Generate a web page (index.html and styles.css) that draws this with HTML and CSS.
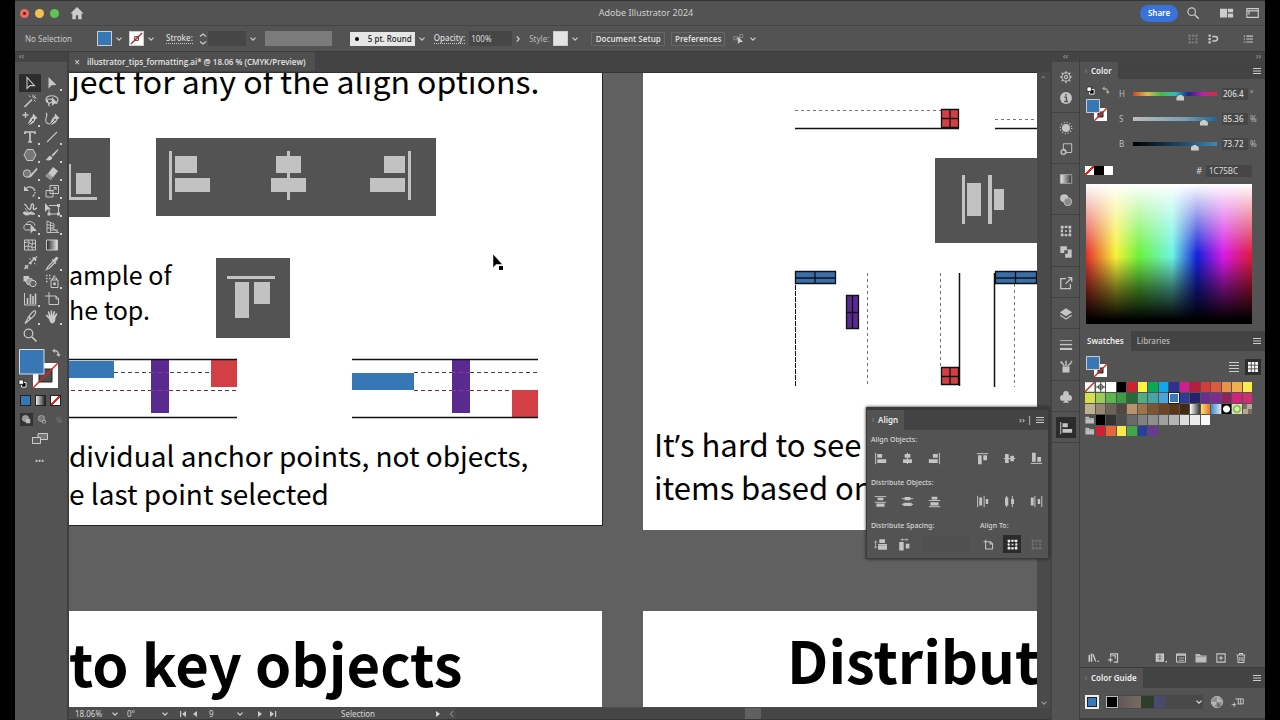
FILE: index.html
```html
<!DOCTYPE html>
<html lang="en">
<head>
<meta charset="utf-8">
<title>Adobe Illustrator 2024</title>
<link rel="stylesheet" href="styles.css">
</head>
<body>
<svg class="defs" aria-hidden="true">
  <defs>
    <linearGradient id="g-bw"><stop offset="0" stop-color="#222"/><stop offset="1" stop-color="#e8e8e8"/></linearGradient>
    <linearGradient id="g-wb"><stop offset="0" stop-color="#eee"/><stop offset="1" stop-color="#333"/></linearGradient>
    <symbol id="caret" viewBox="0 0 8 8"><path d="M1.500 2.700 4 5.200 6.500 2.700" fill="none" stroke="currentColor" stroke-width="1.200"/></symbol>
    <symbol id="menu" viewBox="0 0 8 8"><path d="M0 1.500h8M0 4h8M0 6.500h8" stroke="currentColor"/></symbol>
    <symbol id="arrow" viewBox="0 0 16 16"><path d="M5 2.500v11l3-2.900h4.500z" fill="none" stroke="currentColor" stroke-width="1.100"/></symbol>
    <symbol id="direct" viewBox="0 0 16 16"><path d="M4.500 2v11.500l3.200-3.200 4.800-.3z" fill="currentColor"/></symbol>
    <symbol id="wand" viewBox="0 0 16 16"><path d="M2.500 14 10 6.500" stroke="currentColor" stroke-width="1.700"/><path d="M11 1.500v3M14.500 5h-3M13.500 2.500l-1.700 1.700M7 2.500l1.500 1.500M13.500 8.500 12 7" stroke="currentColor"/></symbol>
    <symbol id="lasso" viewBox="0 0 16 16"><path d="M5 10C1 9 1 4 5.500 3c5-1 8.500 1 8.500 4 0 1-1 2-2 2.500M5 10c-2-1-3-4 1-4s3 3 0 4c-2 1-2 2 0 3" fill="none" stroke="currentColor" stroke-width="1.200"/><path d="M8 4v9l2.300-2.300H14z" fill="currentColor"/></symbol>
    <symbol id="pen" viewBox="0 0 16 16"><path d="m10 2.500 4.500 4.500-2 1.200c-.7 3-3 4.800-7.500 5.800 1-4.500 2-7 4.500-8.500z" fill="currentColor"/><path d="M5 14l5-5" stroke="#535353"/><circle cx="10" cy="8.800" r="1" fill="#535353"/></symbol>
    <symbol id="penplus" viewBox="0 0 16 16"><use href="#pen" x="1" width="16" height="16"/><path d="M3.500 1v6M.5 4h6" stroke="currentColor" stroke-width="1.300"/></symbol>
    <symbol id="curve" viewBox="0 0 16 16"><use href="#pen" x="1" width="16" height="16"/><path d="M2 2c3 2-2 6 0 9 .7 1 2 2 4 2" fill="none" stroke="currentColor" stroke-width="1.100"/></symbol>
    <symbol id="type" viewBox="0 0 16 16"><path d="M3 5V3h10v2M8 3v10M6 13h4" fill="none" stroke="currentColor" stroke-width="1.700"/></symbol>
    <symbol id="line" viewBox="0 0 16 16"><path d="M3 13 13 3" stroke="currentColor" stroke-width="1.100"/></symbol>
    <symbol id="hex" viewBox="0 0 16 16"><path d="M5 2.500h6L14 8l-3 5.500H5L2 8z" fill="#777" stroke="currentColor"/></symbol>
    <symbol id="brush" viewBox="0 0 16 16"><path d="M14 2 7.500 8l1.500 1.500L14.500 3zM6.500 8.700c-3 .3-2.500 3.300-5 3.800 2 1.800 7 1 6.700-2z" fill="currentColor"/></symbol>
    <symbol id="shaper" viewBox="0 0 16 16"><circle cx="5" cy="8.500" r="3.700" fill="#777" stroke="currentColor"/><path d="M15 2.500 8 10l-2.500 2.800L9 12l6.500-7.500z" fill="currentColor"/></symbol>
    <symbol id="eraser" viewBox="0 0 16 16"><path d="m9 2 5 4-5 6.500-5-4z" fill="currentColor"/><path d="m3.500 9 4.700 3.800-1.500 1.700L2 11z" fill="#888" stroke="currentColor" stroke-width=".7"/></symbol>
    <symbol id="rotate" viewBox="0 0 16 16"><path d="M3.500 6.500C6 2 13 4 13 9c0 2-1 3.500-2.500 4.500" fill="none" stroke="currentColor" stroke-width="1.300" stroke-dasharray="12 1 1.500 1"/><path d="M2 3v5h5z" fill="currentColor"/></symbol>
    <symbol id="scale" viewBox="0 0 16 16"><path d="M6 2.500h8.500v8H6zM2 7.500h7v6.500H2zM8 8.500l4-4M9.500 4.500H12V7" fill="none" stroke="currentColor"/></symbol>
    <symbol id="width" viewBox="0 0 16 16"><path d="M2 3.500c3-1 3 5 5.500 5S8 3 10.500 3s-.5 5.500 1.500 5.500S14 7 15 7" fill="none" stroke="currentColor" stroke-width="1.300"/><path d="M1 12c3-3 4 1 6-.5s4 0 6 1.500c-3 1-4-.5-6 .5s-4 1-6-1.500zM3 7l3 4" fill="currentColor" stroke="currentColor" stroke-width=".8"/></symbol>
    <symbol id="free" viewBox="0 0 16 16"><path d="M1 2v9l2.500-2.500H7z" fill="currentColor"/><path d="M5 4.500h9.500v8.500H5V9" fill="none" stroke="currentColor"/><path d="M13 3h3v3h-3zM13 11.500h3v3h-3zM3.500 11.500h3v3h-3z" fill="currentColor"/></symbol>
    <symbol id="builder" viewBox="0 0 16 16"><path d="M8 11H3.500C1 10 1.500 6 4 5.500c1-4 8-4 9 1M4 5.500h5" fill="none" stroke="currentColor"/><path d="M8.500 5v9.500l2.500-2.500h4z" fill="currentColor"/></symbol>
    <symbol id="persp" viewBox="0 0 16 16"><path d="M3 2v11.500h4M3 2l7 3v4M3 5.500l7 1.500M3 9l7 0M6.500 3.500V13M4 13.500h11M7 11h7M8 9l6 4" fill="none" stroke="currentColor" stroke-width=".9"/></symbol>
    <symbol id="mesh" viewBox="0 0 16 16"><path d="M2.500 3h11v10h-11zM2.500 6c5-3 5 3 11 0M2.500 10c5-3 6 2 11 0M6 3c3 4-2 6 1 10M10 3c2 4-2 6 1 10" fill="none" stroke="currentColor"/></symbol>
    <symbol id="grad" viewBox="0 0 16 16"><path d="M2.500 3h11v10h-11z" fill="url(#g-bw)" stroke="currentColor"/></symbol>
    <symbol id="blob" viewBox="0 0 16 16"><path d="M2.500 14 6 10M7.500 8.500l5-5M3 10.500l3 3M10.500 3h3v3" stroke="currentColor" fill="none" stroke-width="1.500"/><path d="M7 7.500 9.500 9" stroke="currentColor" stroke-width="2"/><path d="M7.500 3.500 9 4.500M12 8l1.500 1M14 1l1 1.500" stroke="currentColor"/></symbol>
    <symbol id="dropper" viewBox="0 0 16 16"><path d="m9 5 3-3c1-.8 2.800 1 2 2l-3 3.500z" fill="currentColor"/><path d="M9.500 6 4 11.500l-1.500 3 3-1.500L11 7.500M8 4.500l4 4" fill="none" stroke="currentColor" stroke-width="1.200"/></symbol>
    <symbol id="blend" viewBox="0 0 16 16"><path d="M1.500 3h5.500v5.500H1.500z" fill="currentColor"/><circle cx="7.500" cy="8.500" r="3.300" fill="#999" stroke="currentColor"/><circle cx="11" cy="10.500" r="3.200" fill="#606060" stroke="currentColor"/></symbol>
    <symbol id="spray" viewBox="0 0 16 16"><path d="M7 7h7v7.500H7zM8.500 7V5h4v2M9.500 4.500V3h2" fill="none" stroke="currentColor"/><circle cx="10.500" cy="10.700" r="1.500" fill="currentColor"/><path d="M2 2.500h1.500M5 2.500h1.500M2 5.500h1.500M5 5.500h1.500M2 8.500h1.500" stroke="currentColor" stroke-width="1.500"/></symbol>
    <symbol id="graph" viewBox="0 0 16 16"><path d="M2.500 2v12h12" fill="none" stroke="currentColor"/><path d="M5.500 7v6M8.500 3v10M11 5v8M13.500 2.500v10.500" stroke="currentColor" stroke-width="1.600"/></symbol>
    <symbol id="artb" viewBox="0 0 16 16"><path d="M1 5h11l2.500 2.500V13.500H5V1M12 5v3h2.500" fill="none" stroke="currentColor"/></symbol>
    <symbol id="knife" viewBox="0 0 16 16"><path d="M13.500 2c1 2-2 6-4.500 7.500l-2-2C9 4.500 12 1.500 13.500 2zM6.500 8l2 2L3 14.500z" fill="none" stroke="currentColor" stroke-width="1.200"/></symbol>
    <symbol id="hand" viewBox="0 0 16 16"><path d="M5 10 2 7c-.7-1 .6-1.700 1.400-1L5 7.500 3.800 3.300c-.2-1 1.200-1.300 1.500-.4L6.600 6.500V2c0-1 1.500-1 1.500 0v4.500L9.500 2.700c.3-1 1.700-.6 1.500.4l-1 4 2-2.500c.7-.8 1.800 0 1.200 1L11.500 9c-.2 3-1.200 5.500-3.200 5.500S5.500 12 5 10z" fill="currentColor"/></symbol>
    <symbol id="glass" viewBox="0 0 16 16"><circle cx="6.500" cy="6.500" r="4.300" fill="none" stroke="currentColor" stroke-width="1.300"/><path d="m10 10 4.500 4.500" stroke="currentColor" stroke-width="1.700"/></symbol>
    <symbol id="swap" viewBox="0 0 10 10"><path d="M3.500 2.800c3 0 4 1 4 4" fill="none" stroke="currentColor" stroke-width="1.400"/><path d="M4 .5v4.600L1 2.800zM5.200 6h4.600L7.500 9z" fill="currentColor"/></symbol>
    <symbol id="defc" viewBox="0 0 10 10"><path d="M4 4h5v5H4z" fill="#000" stroke="#fff"/><path d="M1 1h5v5H1z" fill="#fff" stroke="#222"/></symbol>
    <symbol id="mode" viewBox="0 0 16 16"><circle cx="6.500" cy="6.500" r="4.500" fill="#999" stroke="currentColor"/><path d="M7 7h6.500v6.500H7z" fill="currentColor"/></symbol>
    <symbol id="mode2" viewBox="0 0 16 16"><circle cx="6.500" cy="6.500" r="4.500" fill="#777" stroke="currentColor"/><path d="M8 9.500h4.500V13H8z" fill="#555" stroke="currentColor"/></symbol>
    <symbol id="screen" viewBox="0 0 16 16"><path d="M6 2.500h9.500v6H6z" fill="#777" stroke="currentColor"/><path d="M.5 6.500h8v6h-8z" fill="#606060" stroke="currentColor"/></symbol>
    <symbol id="home" viewBox="0 0 16 16"><path d="M8 1 .5 8.500h2.200V15h4v-4.500h2.600V15h4V8.500h2.200z" fill="currentColor"/></symbol>
    <symbol id="layout" viewBox="0 0 16 12"><path d="M0 1h8v10H0zM9 1h6v4H9zM9 6.500h6V11H9z" fill="currentColor"/></symbol>
    <symbol id="wins" viewBox="0 0 16 12"><path d="M1 1h13v10H1zM1 3.500h13M3.500 3.500V8" fill="none" stroke="currentColor" stroke-width="1.300"/></symbol>
    <symbol id="isol" viewBox="0 0 16 16"><path d="M1 5h5v4H1zM9 2h4v4H9zM4 7h6" fill="none" stroke="#999"/><path d="M6.500 4.500v10l3-2.500h4z" fill="currentColor"/></symbol>
    <symbol id="snap" viewBox="0 0 16 16"><path d="M2 2h3v3H2zM2 6.500h3v3H2zM2 11h3v3H2z" fill="currentColor"/><path d="M7 4.500h4a2.800 2.800 0 0 1 0 6H7" fill="none" stroke="currentColor" stroke-width="2"/></symbol>
    <symbol id="list" viewBox="0 0 12 12"><path d="M4 2.500h8M4 6h8M4 9.500h8M1 2.500h1.500M1 6h1.500M1 9.500h1.500" stroke="currentColor" stroke-width="1.300"/></symbol>
    <symbol id="gear" viewBox="0 0 16 16"><circle cx="8" cy="8" r="4.800" fill="none" stroke="currentColor" stroke-width="1.300"/><circle cx="8" cy="8" r="1.800" fill="none" stroke="currentColor" stroke-width="1.300"/><path d="M8 1v3M8 12v3M1 8h3M12 8h3M3 3l2 2M11 11l2 2M3 13l2-2M11 5l2-2" stroke="currentColor" stroke-width="1.300"/></symbol>
    <symbol id="info" viewBox="0 0 16 16"><circle cx="8" cy="8" r="6.800" fill="currentColor"/><path d="M8 3.500v2M6 7h2.500v5M6 12h4.500" stroke="#535353" stroke-width="1.600" fill="none"/></symbol>
    <symbol id="sun" viewBox="0 0 16 16"><circle cx="8" cy="8" r="4.600" fill="currentColor"/><circle cx="8" cy="8" r="6.500" fill="none" stroke="currentColor" stroke-width="1.500" stroke-dasharray="1.200 2.200"/></symbol>
    <symbol id="export" viewBox="0 0 16 16"><path d="M5 8V2h9.500v10H9M4 8.500h3.500M8 9.500v4" fill="none" stroke="currentColor" stroke-width="1.100"/><circle cx="5" cy="11.500" r="2.600" fill="none" stroke="currentColor" stroke-width="1.500"/></symbol>
    <symbol id="trans" viewBox="0 0 16 16"><circle cx="6" cy="6" r="4.700" fill="currentColor"/><circle cx="10" cy="10" r="4.500" fill="#8b8b8b" stroke="currentColor"/></symbol>
    <symbol id="tform" viewBox="0 0 16 16"><path d="M3.500 3.500h9v9h-9z" fill="none" stroke="currentColor" stroke-dasharray="2 1"/><path d="M2 2h3v3H2zM6.700 2h2.600v2.500H6.700zM11 2h3v3h-3zM2 11h3v3H2zM11 11h3v3h-3zM6.700 11.500h2.600V14H6.700zM2 6.700h2.500v2.600H2zM11.500 6.700H14v2.600h-2.500zM7 7h2v2H7z" fill="currentColor"/></symbol>
    <symbol id="pathf" viewBox="0 0 16 16"><path d="M1.500 1.500H9V5h5.500v9.500H7V9H1.500z" fill="currentColor"/><path d="M6 6h4v4H6z" fill="#535353"/></symbol>
    <symbol id="asset" viewBox="0 0 16 16"><path d="M8 3H2v11.500h11V9M7.500 9 14 2.500M10 1.800h4.500V6.500" fill="none" stroke="currentColor" stroke-width="1.500"/></symbol>
    <symbol id="layers" viewBox="0 0 16 16"><path d="M8 1.500 15 6l-7 4.500L1 6z" fill="currentColor"/><path d="M1.500 9.500 8 13.700l6.500-4.200" fill="none" stroke="currentColor" stroke-width="1.500"/></symbol>
    <symbol id="stroke" viewBox="0 0 16 16"><path d="M1 3h14" stroke="currentColor"/><path d="M1 7.500h14" stroke="currentColor" stroke-width="1.600"/><path d="M1 12.500h14" stroke="currentColor" stroke-width="2.400"/></symbol>
    <symbol id="brushes" viewBox="0 0 16 16"><path d="M4 8.500h8v7H4z" fill="currentColor"/><path d="M6 8 3 3.500M8 8V2M10 8l4-4" stroke="currentColor" stroke-width="1.600"/><path d="M1.500 5 2 2l2.500 2zM13 2h2v3z" fill="currentColor"/></symbol>
    <symbol id="club" viewBox="0 0 16 16"><circle cx="8" cy="4.500" r="3.300" fill="currentColor"/><circle cx="4.500" cy="9" r="3.300" fill="currentColor"/><circle cx="11.500" cy="9" r="3.300" fill="currentColor"/><path d="M7 7h2l.5 5 2 2.500h-7l2-2.500z" fill="currentColor"/></symbol>
    <symbol id="al" viewBox="0 0 16 16"><path d="M2 1v14" stroke="currentColor" stroke-width="1.200"/><path d="M4 2.500h6v4.500H4zM4 9h11v4.500H4z" fill="currentColor"/></symbol>
    <symbol id="ac" viewBox="0 0 16 16"><path d="M8 1v14" stroke="currentColor" stroke-width="1.200"/><path d="M4.500 2.500h7v4.500h-7zM2.500 9h11v4.500h-11z" fill="currentColor"/></symbol>
    <symbol id="ar" viewBox="0 0 16 16"><use href="#al" width="16" height="16" transform="matrix(-1 0 0 1 16 0)"/></symbol>
    <symbol id="at" viewBox="0 0 16 16"><use href="#al" width="16" height="16" transform="matrix(0 1 -1 0 16 0)"/></symbol>
    <symbol id="at2" viewBox="0 0 16 16"><path d="M1 2h14" stroke="currentColor" stroke-width="1.200"/><path d="M2.500 4H7v11H2.500zM9 4h4.500v6H9z" fill="currentColor"/></symbol>
    <symbol id="am" viewBox="0 0 16 16"><path d="M1 8h14" stroke="currentColor" stroke-width="1.200"/><path d="M2.500 2.500H7v11H2.500zM9 4.500h4.500v7H9z" fill="currentColor"/></symbol>
    <symbol id="ab" viewBox="0 0 16 16"><path d="M1 14h14" stroke="currentColor" stroke-width="1.200"/><path d="M2.500 1H7v11H2.500zM9 6h4.500v6H9z" fill="currentColor"/></symbol>
    <symbol id="dt" viewBox="0 0 16 16"><path d="M1 2h14M1 9h14" stroke="currentColor" stroke-width="1.200"/><path d="M4.500 3.500h7v3h-7zM3 10.500h10v4H3z" fill="currentColor"/></symbol>
    <symbol id="dm" viewBox="0 0 16 16"><path d="M1 4.500h14M1 11.500h14" stroke="currentColor" stroke-width="1.200"/><path d="M4.500 2.500h7v4h-7zM3 9.500h10v4H3z" fill="currentColor"/></symbol>
    <symbol id="db" viewBox="0 0 16 16"><path d="M1 6.800h14M1 14.400h14" stroke="currentColor" stroke-width="1.200"/><path d="M4.500 2h7v3.500h-7zM3 9h10v4H3z" fill="currentColor"/></symbol>
    <symbol id="dl" viewBox="0 0 16 16"><path d="M2 1v14M10 1v14" stroke="currentColor" stroke-width="1.200"/><path d="M4 3h3.500v10H4zM12 5h3v6h-3z" fill="currentColor"/></symbol>
    <symbol id="dc" viewBox="0 0 16 16"><path d="M4.500 1v14M11.500 1v14" stroke="currentColor" stroke-width="1.200"/><path d="M2.500 3h4v10h-4zM10 5h3.500v6H10z" fill="currentColor"/></symbol>
    <symbol id="dr" viewBox="0 0 16 16"><path d="M6 1v14M14.500 1v14" stroke="currentColor" stroke-width="1.200"/><path d="M1 3h3.500v10H1zM9.500 5h3v6h-3z" fill="currentColor"/></symbol>
    <symbol id="sv" viewBox="0 0 16 16"><path d="M5 9h11v5.500H5zM6.500 1.500h7v4.500h-7zM5 7.500h11v1H5z" fill="currentColor"/><path d="M2 4v8M.5 5.500 2 3.500l1.500 2M.5 10.500 2 12.500l1.500-2" stroke="currentColor" fill="none"/></symbol>
    <symbol id="sh" viewBox="0 0 16 16"><path d="M1.500 5H7v10.500H1.500zM9.500 7H14v6H9.500z" fill="currentColor"/><path d="M4 2h8M5.500.5 4 2l1.500 1.500M10.500.5 12 2l-1.500 1.500" stroke="currentColor" fill="none"/></symbol>
    <symbol id="toart" viewBox="0 0 16 16"><path d="M2 4.500h8.500L13 7v6.500H4.500V2M10 4.500V7.500h3" fill="none" stroke="currentColor" stroke-width="1.300"/></symbol>
    <symbol id="folder" viewBox="0 0 12 10"><path d="M.5 1h4l1.500 1.500h5.500V9.500H.5z" fill="#bdbdbd"/><path d="M.5 3.600h11" stroke="#888" stroke-width=".7"/></symbol>
    <symbol id="grid9" viewBox="0 0 12 12"><path d="M1 1h2.800v2.800H1zM4.600 1h2.800v2.800H4.600zM8.200 1H11v2.800H8.200zM1 4.600h2.800v2.800H1zM4.600 4.600h2.800v2.800H4.600zM8.200 4.600H11v2.800H8.200zM1 8.200h2.800V11H1zM4.600 8.200h2.800V11H4.600zM8.200 8.200H11V11H8.200z" fill="currentColor"/></symbol>
    <symbol id="rows" viewBox="0 0 12 12"><path d="M1 1.500h10M1 4.500h10M1 7.500h10M1 10.500h10" stroke="currentColor" stroke-width="1.200"/></symbol>
    <symbol id="lib" viewBox="0 0 16 16"><path d="M3 4v9M6 2v11" stroke="currentColor" stroke-width="2"/><path d="m8 3 3.500 9.500M14 12.500h2" stroke="currentColor" stroke-width="1.800"/></symbol>
    <symbol id="addlib" viewBox="0 0 16 16"><path d="M5 7V2.500h9v11H9" fill="none" stroke="currentColor" stroke-width="1.600"/><path d="M1.500 10.500h6M4.500 7.500v6M7 5h4v4" stroke="currentColor" stroke-width="1.400" fill="none"/></symbol>
    <symbol id="kinds" viewBox="0 0 16 16"><path d="M1 2h11v11H1z" fill="currentColor"/><path d="M3 5.500h7M3 9h7M6.500 3v9" stroke="#666"/><path d="M14 13h2" stroke="currentColor" stroke-width="2"/></symbol>
    <symbol id="opts" viewBox="0 0 16 16"><path d="M2 2.500h12v11H2z" fill="none" stroke="currentColor" stroke-width="1.300"/><path d="M2 4h12" stroke="currentColor" stroke-width="2"/><path d="M5 8h7M5 11h7" stroke="currentColor"/></symbol>
    <symbol id="plus" viewBox="0 0 16 16"><path d="M2.500 2.500h11v11h-11zM8 5v6M5 8h6" fill="none" stroke="currentColor" stroke-width="1.400"/></symbol>
    <symbol id="trash" viewBox="0 0 16 16"><path d="M2 4h12M6 3.500V2h4v1.500M3.500 5l.7 9h7.600l.7-9M6.500 6.500v5.500M9.500 6.500v5.500" fill="none" stroke="currentColor" stroke-width="1.400"/></symbol>
    <symbol id="wheel" viewBox="0 0 16 16"><circle cx="8" cy="8" r="6.500" fill="#8e8e8e" stroke="#bbb"/><path d="M8 1.500 14.500 8H8zM8 8H1.500L5 13z" fill="#b8b8b8"/><path d="M8 8v6.500l5-2z" fill="#6e6e6e"/></symbol>
    <symbol id="savegrp" viewBox="0 0 18 14"><path d="M6 2h11v7H9M10 2v7M13.500 2v7M1 10h6M4.500 7v6" fill="none" stroke="currentColor" stroke-width="1.300"/></symbol>
  </defs>
</svg>
<div class="app">
  <header class="titlebar">
    <div class="title-left">
      <span class="light red"></span><span class="light amber"></span><span class="light green"></span>
      <button class="icon-btn home" aria-label="Home"><svg class="i14"><use href="#home"/></svg></button>
    </div>
    <h1 class="app-title">Adobe Illustrator 2024</h1>
    <div class="title-right">
      <button class="share">Share</button>
      <button class="icon-btn search" aria-label="Search"><svg class="i14"><use href="#glass"/></svg></button>
      <button class="icon-btn layout" aria-label="Arrange documents"><svg class="i14"><use href="#layout"/></svg></button>
      <button class="icon-btn" aria-label="Switch workspace"><svg class="i14"><use href="#wins"/></svg></button>
    </div>
  </header>

  <div class="controlbar">
    <span class="selection">No Selection</span>
    <div class="pick"><button class="chip blue" aria-label="Fill"></button><button class="icon-btn" aria-label="Fill options"><svg class="i8"><use href="#caret"/></svg></button></div>
    <div class="pick wide"><button class="chip" aria-label="Stroke colour"><svg class="full" viewBox="0 0 14 14"><path fill="#fff" d="M0 0h14v14H0z"/><path d="M5 5h4v4H5z" fill="none" stroke="#333"/><path d="M1 13 13 1" stroke="#c22" stroke-width="1.500"/></svg></button><button class="icon-btn" aria-label="Stroke options"><svg class="i8"><use href="#caret"/></svg></button></div>
    <label class="lbl stroke-lbl" for="weight">Stroke:</label>
    <div class="weight"><button class="icon-btn" aria-label="Step weight"><svg class="step" viewBox="0 0 10 14"><path d="m2 4.500 3-2.500 3 2.500M2 9.500 5 12l3-2.500" fill="none" stroke="currentColor" stroke-width="1.200"/></svg></button><input id="weight" class="field"><button class="icon-btn" aria-label="Weight presets"><svg class="i8"><use href="#caret"/></svg></button></div>
    <button class="profile" aria-label="Width profile"></button>
    <div class="brushpick"><button class="brush"><span class="dot"></span>5 pt. Round</button><button class="icon-btn" aria-label="Brushes"><svg class="i8"><use href="#caret"/></svg></button></div>
    <label class="lbl opacity-lbl" for="opacity">Opacity:</label>
    <div class="opacity"><input id="opacity" class="field" value="100%"><button class="icon-btn" aria-label="Opacity slider"><svg class="i8 right"><use href="#caret"/></svg></button></div>
    <span class="style-lbl">Style:</span>
    <div class="pick stylepick"><button class="chip plain" aria-label="Graphic style"></button><button class="icon-btn" aria-label="Styles"><svg class="i8"><use href="#caret"/></svg></button></div>
    <button class="cmd setup">Document Setup</button>
    <button class="cmd prefs">Preferences</button>
    <button class="icon-btn isol" aria-label="Select similar"><svg class="i12"><use href="#isol"/></svg><svg class="i8"><use href="#caret"/></svg></button>
    <div class="cb-right">
      <svg class="i12 dim"><use href="#tform"/></svg>
      <button class="icon-btn" aria-label="Snap"><svg class="i12"><use href="#snap"/></svg></button>
      <button class="icon-btn last" aria-label="Control menu"><svg class="i10"><use href="#list"/></svg></button>
    </div>
  </div>

  <main class="main">
    <aside class="tools">
      <div class="grip">‹‹</div>
      <div class="toolgrid">
        <button class="tool on" aria-label="Selection"><svg><use href="#arrow"/></svg></button>
        <button class="tool more" aria-label="Direct Selection"><svg><use href="#direct"/></svg></button>
        <button class="tool" aria-label="Magic Wand"><svg><use href="#wand"/></svg></button>
        <button class="tool" aria-label="Lasso"><svg><use href="#lasso"/></svg></button>
        <button class="tool more" aria-label="Pen"><svg><use href="#penplus"/></svg></button>
        <button class="tool" aria-label="Curvature"><svg><use href="#curve"/></svg></button>
        <button class="tool more" aria-label="Type"><svg><use href="#type"/></svg></button>
        <button class="tool more" aria-label="Line Segment"><svg><use href="#line"/></svg></button>
        <button class="tool more" aria-label="Polygon"><svg><use href="#hex"/></svg></button>
        <button class="tool more" aria-label="Paintbrush"><svg><use href="#brush"/></svg></button>
        <button class="tool more" aria-label="Shaper"><svg><use href="#shaper"/></svg></button>
        <button class="tool more" aria-label="Eraser"><svg><use href="#eraser"/></svg></button>
        <button class="tool more" aria-label="Rotate"><svg><use href="#rotate"/></svg></button>
        <button class="tool more" aria-label="Scale"><svg><use href="#scale"/></svg></button>
        <button class="tool more" aria-label="Width"><svg><use href="#width"/></svg></button>
        <button class="tool more" aria-label="Free Transform"><svg><use href="#free"/></svg></button>
        <button class="tool more" aria-label="Shape Builder"><svg><use href="#builder"/></svg></button>
        <button class="tool more" aria-label="Perspective Grid"><svg><use href="#persp"/></svg></button>
        <button class="tool" aria-label="Mesh"><svg><use href="#mesh"/></svg></button>
        <button class="tool" aria-label="Gradient"><svg><use href="#grad"/></svg></button>
        <button class="tool" aria-label="Dimension"><svg><use href="#blob"/></svg></button>
        <button class="tool more" aria-label="Eyedropper"><svg><use href="#dropper"/></svg></button>
        <button class="tool" aria-label="Blend"><svg><use href="#blend"/></svg></button>
        <button class="tool more" aria-label="Symbol Sprayer"><svg><use href="#spray"/></svg></button>
        <button class="tool more" aria-label="Column Graph"><svg><use href="#graph"/></svg></button>
        <button class="tool" aria-label="Artboard"><svg><use href="#artb"/></svg></button>
        <button class="tool more" aria-label="Slice"><svg><use href="#knife"/></svg></button>
        <button class="tool more" aria-label="Hand"><svg><use href="#hand"/></svg></button>
        <button class="tool" aria-label="Zoom"><svg><use href="#glass"/></svg></button>
      </div>
      <svg class="fillstroke" viewBox="0 0 42 44" role="img" aria-label="Fill and stroke">
        <path d="M14 15h25v25H14z" fill="#fff"/><path d="M20 21h13v13H20z" fill="#4d4d4d" stroke="#222"/><path d="M14 40 39 15" stroke="#d22" stroke-width="1.500"/>
        <path d="M.5 1.500h24.500v24.500H.5z" fill="#3877b5" stroke="#ddd"/>
        <use href="#swap" x="32" y="0" width="10" height="10"/><use href="#defc" x="-1" y="31" width="9" height="9"/>
      </svg>
      <div class="trio"><button class="mini blue" aria-label="Color"></button><button class="mini gradient" aria-label="Gradient fill"></button><button class="mini none" aria-label="None"></button></div>
      <div class="trio modes"><button class="mode on" aria-label="Draw normal"><svg class="i11"><use href="#mode"/></svg></button><button class="mode" aria-label="Draw behind"><svg class="i11"><use href="#mode2"/></svg></button><span class="mode off"><svg class="i8"><use href="#mode"/></svg></span></div>
      <button class="icon-btn screen" aria-label="Screen mode"><svg class="i16"><use href="#screen"/></svg></button>
      <button class="icon-btn dots" aria-label="Edit toolbar">•••</button>
    </aside>

    <section class="workspace">
      <div class="tabs"><div class="doc-tab"><button class="icon-btn close" aria-label="Close">×</button><span>illustrator_tips_formatting.ai* @ 18.06 % (CMYK/Preview)</span></div></div>
      <div class="viewport">
        <div class="canvas">
          <svg class="art" viewBox="0 0 968 634" width="968" height="634" aria-hidden="true">
            <path d="M0 0h533v453H0zM574 0h394v457H574zM0 538h533v96H0zM574 538h394v96H574z" fill="#fff"/>
            <path d="M533.5 0v453M0 452.500h534" stroke="#222"/>
            <path d="M0 65h41v79H0zM87 65h280v78H87zM147 185h74v80h-74zM866 85h102v85H866z" fill="#535353"/>
            <g fill="#c2c2c2">
              <path d="M0 91h2v34H0zM7 100h15v21H7zM0 124h28v3H0z"/>
              <path d="M100 78h3v49h-3zM106 83h22v17h-22zM106 105h35v14h-35zM218 78h3v49h-3zM207 83h25v17h-25zM202 105h35v14h-35zM339 78h3v49h-3zM315 83h21v17h-21zM301 105h35v14h-35z"/>
              <path d="M158 203h48v3h-48zM166 209h14v36h-14zM185 209h16v22h-16z"/>
              <path d="M893 102h3v49h-3zM898 110h14v33h-14zM919 102h4v49h-4zM925 116h10v21h-10z"/>
            </g>
            <g fill="none" stroke="#7b2340" stroke-dasharray="4 3"><path d="M45 299.500h123M345 299.500h124" stroke="#33425c"/><path d="M2 317.500h166M345 317.500h98"/></g>
            <path d="M0 288h45v17H0zM283 300h62v17h-62z" fill="#3777b5"/>
            <path d="M82 287h18v53H82zM383 287h18v53h-18z" fill="#5b2a90"/>
            <path d="M142 287h26v27h-26zM443 317h26v27h-26z" fill="#d24046"/>
            <path d="M0 286.500h168M283 286.500h186M0 344.500h168M283 344.500h186" stroke="#111" stroke-width="1.500"/>
            <path d="M82 299.500h18M82 317.500h18M383 299.500h18M383 317.500h18" stroke="#8a3aa0" stroke-dasharray="4 3"/>
            <g fill="none" stroke="#777" stroke-dasharray="3 3"><path d="M726 37.500h146M926 46.500h42M798.500 200v114M871.500 200v93M945.500 211v103"/></g>
            <path d="M726 55.500h164M926 55.500h42M890.500 200v113M925.500 200v114" stroke="#111" stroke-width="1.500"/>
            <path d="M726.500 200v114" stroke="#111" stroke-dasharray="5 1"/>
            <g stroke="#111" stroke-width="1.300">
              <path d="M872.500 36.500h17v18h-17zM881 36v18M872 45.500h18M872.500 294.500h17v17h-17zM881 294v18M872 303.500h18" fill="#d24046"/>
              <path d="M726.500 198.500h40v12h-40zM746 198v12M726 205h40M926.500 198.500h41v12h-41zM946.500 198v12M926 205h42" fill="#3a6ea8"/>
              <path d="M777.500 222.500h12v33h-12zM783.500 222v34M777 239.500h13" fill="#5b2a90"/>
            </g>
            <path d="M424 181v14l3-3.500h6.500z" fill="#000" stroke="#fff" stroke-width=".5"/><path d="M430 193h4v4h-4z" fill="#000"/>
          </svg>
          <p class="copy c1">ject for any of the align options.</p>
          <p class="copy c2">ample of<br>he top.</p>
          <p class="copy c3">dividual anchor points, not objects,<br>e last point selected</p>
          <p class="copy c4">It<span class="apos">’</span>s hard to see<br>items based on</p>
          <h2 class="head h-a">to key objects</h2>
          <h2 class="head h-b">Distribut</h2>
        </div>
        <div class="vscroll"><span class="up">⌃</span><svg class="i8"><use href="#caret"/></svg></div>
      </div>
      <footer class="status">
        <select class="s-zoom" aria-label="Zoom"><option>18.06%</option></select><svg class="i8"><use href="#caret"/></svg>
        <select class="s-rot" aria-label="Rotate view"><option>0°</option></select><svg class="i8"><use href="#caret"/></svg>
        <button class="icon-btn first" aria-label="First artboard"><svg class="i8" viewBox="0 0 8 8"><path d="M1 1h1.200v6H1zM7 1v6L3 4z" fill="currentColor"/></svg></button>
        <button class="icon-btn prev" aria-label="Previous artboard"><svg class="i8" viewBox="0 0 8 8"><path d="M6 1v6L2 4z" fill="currentColor"/></svg></button>
        <select class="s-page" aria-label="Artboard number"><option>9</option></select><svg class="i8"><use href="#caret"/></svg>
        <button class="icon-btn next" aria-label="Next artboard"><svg class="i8" viewBox="0 0 8 8"><path d="M2 1v6l4-3z" fill="currentColor"/></svg></button>
        <button class="icon-btn endb" aria-label="Last artboard"><svg class="i8" viewBox="0 0 8 8"><path d="M1 1v6l4-3zM6 1h1.200v6H6z" fill="currentColor"/></svg></button>
        <span class="s-tool">Selection</span>
        <svg class="i8 play" viewBox="0 0 8 8"><path d="M2 1v6l4-3z" fill="currentColor"/></svg>
        <svg class="i8 back" viewBox="0 0 8 8"><path d="M5 1 2.500 4 5 7" fill="none" stroke="#999"/></svg>
        <div class="hscroll"><span class="thumb"></span></div>
      </footer>

      <section class="align">
        <header class="ptabs"><h3 class="ptab active"><i class="nub"></i>Align</h3><span class="align-ctl">›› |</span><button class="icon-btn" aria-label="Align menu"><svg class="i8"><use href="#menu"/></svg></button></header>
        <h4>Align Objects:</h4>
        <div class="arow">
          <button aria-label="Align left"><svg class="i13"><use href="#al"/></svg></button><button aria-label="Align center"><svg class="i13"><use href="#ac"/></svg></button><button aria-label="Align right"><svg class="i13"><use href="#ar"/></svg></button><span></span><button aria-label="Align top"><svg class="i13"><use href="#at2"/></svg></button><button aria-label="Align middle"><svg class="i13"><use href="#am"/></svg></button><button aria-label="Align bottom"><svg class="i13"><use href="#ab"/></svg></button>
        </div>
        <h4>Distribute Objects:</h4>
        <div class="arow">
          <button aria-label="Distribute top"><svg class="i13"><use href="#dt"/></svg></button><button aria-label="Distribute middle"><svg class="i13"><use href="#dm"/></svg></button><button aria-label="Distribute bottom"><svg class="i13"><use href="#db"/></svg></button><span></span><button aria-label="Distribute left"><svg class="i13"><use href="#dl"/></svg></button><button aria-label="Distribute center"><svg class="i13"><use href="#dc"/></svg></button><button aria-label="Distribute right"><svg class="i13"><use href="#dr"/></svg></button>
        </div>
        <div class="twoheads"><h4>Distribute Spacing:</h4><h4>Align To:</h4></div>
        <div class="arow spacing-row">
          <button aria-label="Vertical space"><svg class="i13"><use href="#sv"/></svg></button><button aria-label="Horizontal space"><svg class="i13"><use href="#sh"/></svg></button><input class="spacing" aria-label="Spacing" disabled><button class="to-art" aria-label="Align to artboard"><svg class="i13"><use href="#toart"/></svg></button><button class="on" aria-label="Align to selection"><svg class="i13"><use href="#tform"/></svg></button><button class="faint" aria-label="Align to key object"><svg class="i13"><use href="#tform"/></svg></button>
        </div>
      </section>
    </section>

    <nav class="dock">
      <div class="grip mid">‹‹</div>
      <div class="dsec"><button aria-label="Properties"><svg class="i14"><use href="#gear"/></svg></button><button aria-label="Info"><svg class="i14"><use href="#info"/></svg></button></div>
      <div class="dsec"><button aria-label="Appearance"><svg class="i14"><use href="#sun"/></svg></button><button aria-label="Graphic Styles"><svg class="i14"><use href="#export"/></svg></button></div>
      <div class="dsec"><button aria-label="Gradient"><svg class="i14" viewBox="0 0 16 16"><path d="M1.500 3h13v10h-13z" fill="url(#g-wb)" stroke="#aaa"/></svg></button><button aria-label="Transparency"><svg class="i14"><use href="#trans"/></svg></button></div>
      <div class="dsec"><button aria-label="Transform"><svg class="i14"><use href="#tform"/></svg></button><button aria-label="Pathfinder"><svg class="i14"><use href="#pathf"/></svg></button></div>
      <div class="dsec"><button aria-label="Asset Export"><svg class="i14"><use href="#asset"/></svg></button></div>
      <div class="dsec"><button aria-label="Layers"><svg class="i14"><use href="#layers"/></svg></button></div>
      <div class="dsec"><button aria-label="Stroke"><svg class="i14"><use href="#stroke"/></svg></button><button aria-label="Brushes"><svg class="i14"><use href="#brushes"/></svg></button></div>
      <div class="dsec"><button aria-label="Symbols"><svg class="i14"><use href="#club"/></svg></button></div>
      <div class="dsec"><button class="on" aria-label="Align"><svg class="i14"><use href="#al"/></svg></button></div>
    </nav>

    <aside class="panels">
      <div class="grip end">››</div>
      <section class="panel">
        <header class="ptabs"><h3 class="ptab active"><i class="nub"></i>Color</h3><button class="icon-btn pmenu" aria-label="Color menu"><svg class="i8"><use href="#menu"/></svg></button></header>
        <div class="color-top">
          <svg class="fs-small" viewBox="0 0 24 36" aria-hidden="true"><use href="#defc" x="0" y="0" width="9" height="9"/><use href="#swap" x="15" y="0" width="9" height="9"/><path d="M8 22h13v13H8z" fill="#fff"/><path d="M12 26h5v5h-5z" fill="#555" stroke="#222"/><path d="M8 35 21 22" stroke="#d22" stroke-width="1.500"/><path d="M.5 13.500h13v13H.5z" fill="#3877b5" stroke="#ccc"/></svg>
          <div class="sliders">
            <label for="h">H</label><input id="h" class="rng hue" type="range" max="360" value="206"><input class="num" aria-label="Hue" value="206.4"><span>°</span>
            <label for="s">S</label><input id="s" class="rng sat" type="range" max="100" value="88"><input class="num" aria-label="Saturation" value="85.36"><span>%</span>
            <label for="b">B</label><input id="b" class="rng bri" type="range" max="100" value="76"><input class="num" aria-label="Brightness" value="73.72"><span>%</span>
          </div>
        </div>
        <div class="hexrow"><button class="q none" aria-label="None"></button><button class="q black" aria-label="Black"></button><button class="q white" aria-label="White"></button><label for="hexv">#</label><input id="hexv" class="hexv" value="1C75BC"></div>
        <div class="spectrum"></div>
      </section>
      <section class="panel swatches">
        <header class="ptabs tall"><h3 class="ptab active">Swatches</h3><h3 class="ptab">Libraries</h3><button class="icon-btn pmenu" aria-label="Swatches menu"><svg class="i8"><use href="#menu"/></svg></button></header>
        <div class="sw-top">
          <svg class="fs-mini" viewBox="0 0 24 22" aria-hidden="true"><path d="M8 8h13v13H8z" fill="#fff"/><path d="M12 12h5v5h-5z" fill="#555" stroke="#222"/><path d="M8 21 21 8" stroke="#d22" stroke-width="1.500"/><path d="M.5.5h13v13H.5z" fill="#3877b5" stroke="#ccc"/></svg>
          <button class="view" aria-label="List view"><svg class="i12"><use href="#rows"/></svg></button><button class="view on" aria-label="Grid view"><svg class="i12"><use href="#grid9"/></svg></button>
        </div>
        <div class="swgrid" id="swgrid"></div>
        <div class="pfoot">
          <button class="icon-btn" aria-label="Swatch libraries"><svg class="i12"><use href="#lib"/></svg></button><button class="icon-btn" aria-label="Add to library"><svg class="i12"><use href="#addlib"/></svg></button><span class="grow"></span>
          <button class="icon-btn" aria-label="Swatch kinds"><svg class="i12"><use href="#kinds"/></svg></button><button class="icon-btn" aria-label="Swatch options"><svg class="i12"><use href="#opts"/></svg></button><button class="icon-btn" aria-label="New group"><svg class="i12"><use href="#folder"/></svg></button><button class="icon-btn" aria-label="New swatch"><svg class="i12"><use href="#plus"/></svg></button><button class="icon-btn" aria-label="Delete"><svg class="i12"><use href="#trash"/></svg></button>
        </div>
      </section>
      <section class="panel guide">
        <header class="ptabs tall"><h3 class="ptab active"><i class="nub"></i>Color Guide</h3><button class="icon-btn pmenu" aria-label="Color Guide menu"><svg class="i8"><use href="#menu"/></svg></button></header>
        <div class="guide-row">
          <button class="base" aria-label="Base color"></button>
          <div class="harmony"><span class="hblack"></span><span class="h1"></span><span class="h2"></span><span class="h3"></span><svg class="i8"><use href="#caret"/></svg></div>
          <button class="icon-btn" aria-label="Edit colors"><svg class="i14"><use href="#wheel"/></svg></button><button class="icon-btn" aria-label="Save group"><svg class="i13"><use href="#savegrp"/></svg></button>
        </div>
      </section>
    </aside>
  </main>
</div>
<script src="swatches.js"></script>
</body>
</html>
```
FILE: styles.css
```css
* { box-sizing: border-box; }
body { margin: 0; background: #000; color: #ddd; font: 8px/12px "Noto Sans", "Open Sans", sans-serif; overflow: hidden; }
h1, h2, h3, h4, p { margin: 0; font-size: inherit; font-weight: inherit; }
button, input, select { font: inherit; color: inherit; border: 0; padding: 0; margin: 0; background: none; border-radius: 0; }
input, select { appearance: none; min-width: 0; }
svg { display: block; flex: none; }
.defs { position: absolute; width: 0; height: 0; }
.i8 { width: 8px; height: 8px; }
.i10 { width: 10px; height: 10px; }
.i11 { width: 11px; height: 11px; }
.i12 { width: 12px; height: 12px; }
.i13 { width: 13px; height: 13px; }
.i14 { width: 14px; height: 14px; }
.i16 { width: 16px; height: 16px; }
.icon-btn { display: flex; align-items: center; justify-content: center; color: #ccc; }
.full { width: 100%; height: 100%; }

.app { display: flex; flex-direction: column; height: 100vh; margin: 0 15px; background: #535353; }

.titlebar { display: grid; grid-template-columns: 1fr auto 1fr; align-items: center; height: 26px; padding: 0 5px 0 17px; border-top: 1px solid #333; border-bottom: 1px solid #444; }
.title-left, .title-right { display: flex; align-items: center; }
.title-left { margin-left: -12px; }
.title-right { justify-content: flex-end; }
.light { width: 9px; height: 9px; margin-right: 6px; border-radius: 50%; }
.red { background: radial-gradient(circle, #7a1512 0 1px, #ec6a5e 2px); }
.amber { background: #f4bf50; }
.green { background: #61c555; }
.home { margin-left: 5px; }
.app-title { font-size: 9px; color: #d0d0d0; }
.share { height: 17px; width: 38px; margin-right: 8px; border-radius: 9px; background: #3873d9; color: #fff; font-weight: 600; }
.search { margin-right: 20px; }
.layout { margin-right: 12px; }

.controlbar { display: flex; align-items: center; height: 26px; padding: 0 12px 0 10px; border-bottom: 1px solid #3c3c3c; }
.controlbar > * { flex: none; }
.selection { width: 72px; color: #c8c8c8; }
.pick { display: flex; align-items: center; gap: 3px; width: 32px; }
.wide { width: 37px; }
.chip { width: 15px; height: 15px; border: 1px solid #ccc; }
.blue { background: #3877b5; }
.plain { background: #e4e4e4; }
.lbl { border-bottom: 1px dotted #ccc; line-height: 10px; font-weight: 500; }
.stroke-lbl { margin-right: 5px; }
.weight { display: flex; align-items: center; width: 67px; }
.step { width: 10px; height: 14px; }
.field { height: 15px; background: #464646; }
.weight .field { width: 38px; margin-right: 3px; }
.profile { width: 67px; height: 15px; margin-right: 18px; background: #7b7b7b; }
.brushpick { display: flex; align-items: center; gap: 3px; width: 84px; }
.brush { display: flex; align-items: center; gap: 9px; width: 65px; height: 14px; padding-left: 5px; background: #e6e6e6; color: #222; font-weight: 500; }
.dot { width: 4px; height: 4px; border-radius: 50%; background: #000; }
.opacity-lbl { margin-right: 4px; }
.opacity { display: flex; align-items: center; gap: 2px; width: 60px; }
.opacity .field { width: 43px; padding-left: 2px; }
.right { transform: rotate(-90deg); }
.style-lbl { width: 24px; color: #bbb; }
.stylepick { width: 38px; }
.cmd { height: 14px; border: 1px solid #666; font-weight: 600; }
.setup { width: 74px; margin-right: 6px; }
.prefs { width: 54px; margin-right: 8px; }
.isol { gap: 4px; }
.cb-right { display: flex; align-items: center; gap: 8px; margin-left: auto; }
.cb-right .last { margin-left: 16px; }
.dim { color: #7a7a7a; }

.main { display: flex; flex: 1; min-height: 0; }
.grip { height: 10px; padding-left: 4px; background: #444; color: #aaa; font-size: 8px; line-height: 8px; }
.mid { text-align: center; padding: 0; }
.end { text-align: right; padding-right: 4px; }

.tools { width: 54px; flex: none; border-right: 2px solid #404040; }
.toolgrid { display: grid; grid-template-columns: 22px 22px; grid-auto-rows: 18px; padding: 12px 0 0 4px; }
.tool { position: relative; display: grid; place-items: center; color: #c8c8c8; }
.tool svg { width: 16px; height: 16px; }
.tool.on { background: #2d2d2d; }
.tool.more::after { content: ""; position: absolute; right: 1px; bottom: 1px; width: 2px; height: 2px; background: #ccc; }
.fillstroke { width: 42px; height: 44px; margin: 4px 0 0 4px; overflow: visible; color: #bbb; }
.trio { display: flex; gap: 4px; margin: 3px 0 0 5px; }
.mini { width: 11px; height: 11px; border: 1px solid #222; }
.mini.gradient { background: linear-gradient(90deg, #eee, #222); }
.none { background: linear-gradient(135deg, #fff 43%, #d22 44% 56%, #fff 57%); }
.modes { gap: 3px; margin: 7px 0 0 5px; color: #bbb; }
.mode { display: grid; place-items: center; width: 13px; height: 13px; }
.mode.on { background: #333; }
.mode.off { opacity: .2; }
.screen { margin: 5px 0 0 17px; }
.dots { margin: 10px 0 0 20px; line-height: 8px; }

.workspace { position: relative; display: flex; flex-direction: column; flex: 1; min-width: 0; }
.tabs { height: 20px; background: #434343; }
.doc-tab { display: flex; align-items: center; gap: 6px; width: 246px; height: 19px; padding-left: 4px; background: #4f4f4f; color: #e6e6e6; font: 600 8px/12px "Open Sans", sans-serif; }
.close { font-size: 10px; width: 8px; }
.viewport { display: flex; flex: 1; min-height: 0; }
.canvas { position: relative; flex: 1; overflow: hidden; background: #606060; border-top: 1px solid #333; }
.art { position: absolute; left: 0; top: 0; }
.copy, .head { position: absolute; color: #000; white-space: nowrap; font-family: "Noto Sans CJK SC", sans-serif; }
.apos { font-family: "Open Sans", sans-serif; }
.c1 { left: 2px; top: -17px; font-size: 32px; line-height: 48px; }
.c2 { left: 0; top: 184px; font-size: 25px; line-height: 35px; }
.c3 { left: 0; top: 363px; font-size: 28px; line-height: 38px; }
.c4 { left: 585px; top: 350px; font-size: 31px; line-height: 42px; }
.head { font-weight: 700; font-size: 58px; line-height: 60px; }
.h-a { left: 0; top: 559px; }
.h-b { left: 718px; top: 556px; }
.vscroll { display: flex; flex-direction: column; justify-content: space-between; align-items: center; width: 13px; background: #4a4a4a; color: #999; }
.up { line-height: 14px; }
.status { display: flex; align-items: center; height: 13px; padding: 1px 0 0 6px; border-bottom: 1px solid #393939; background: #4d4d4d; color: #d6d6d6; }
.status select { height: 11px; line-height: 11px; }
.s-zoom { width: 36px; }
.s-rot { width: 34px; margin-left: 8px; }
.first { margin-left: 10px; }
.prev { margin-left: 4px; }
.s-page { width: 27px; margin-left: 10px; }
.next { margin-left: 12px; }
.endb { margin-left: 5px; }
.s-tool { margin-left: 64px; width: 93px; }
.back { margin-left: 6px; }
.hscroll { display: flex; justify-content: center; flex: 1; height: 11px; background: #464646; }
.thumb { width: 16px; background: #606060; }

.align { position: absolute; right: 1px; top: 355px; width: 183px; height: 152px; padding: 0 0 0 4px; background: #535353; border: 1px solid #3a3a3a; border-top: 3px solid #3a3a3a; box-shadow: 0 0 3px #222; }
.align .ptabs { margin-left: -4px; height: 20px; padding-right: 4px; }
.align-ctl { margin-left: auto; margin-right: 4px; font-size: 9px; }
.align h4 { margin-top: 4px; line-height: 12px; color: #d6d6d6; font-size: 7px; font-weight: 500; }
.arow { display: grid; grid-template-columns: 27px 27px 27px 21px 27px 27px 18px; align-items: center; height: 27px; margin-left: -3px; padding-bottom: 3px; }
.arow button { display: grid; place-items: center; width: 18px; height: 18px; margin-left: 3px; color: #c4c4c4; }
.spacing-row { grid-template-columns: 24px 24px 60px 24px 24px 18px; }
.arow .on { background: #2b2b2b; color: #eee; }
.arow .faint { opacity: .25; }
.arow .spacing { justify-self: center; width: 48px; height: 14px; background: #505050; }
.twoheads { display: grid; grid-template-columns: 109px 1fr; }

.dock { width: 30px; flex: none; border-left: 2px solid #434343; border-right: 1px solid #3f3f3f; }
.dsec { display: flex; flex-direction: column; align-items: center; padding: 4px 0; border-bottom: 1px solid #414141; }
.dsec button { display: grid; place-items: center; width: 20px; height: 21px; color: #c4c4c4; }
.dsec:nth-child(n+5) { padding: 5px 0 4px; }
.dsec .on { background: #2c2c2c; }

.panels { display: flex; flex-direction: column; width: 185px; flex: none; }
.ptabs { display: flex; align-items: center; flex: none; height: 17px; background: #434343; }
.ptab { display: flex; align-items: center; height: 100%; padding: 0 6px; color: #bbb; font-weight: 500; }
.ptab.active { background: #535353; color: #eee; padding-left: 5px; font-weight: 600; }
.nub { width: 2px; height: 4px; margin-right: 4px; border: 1px solid #666; }
.tall { height: 20px; }
.pmenu { margin-left: auto; margin-right: 4px; }
.color-top { display: flex; padding: 7px 8px 0 6px; }
.fs-small { width: 24px; height: 36px; color: #aaa; }
.sliders { display: grid; grid-template-columns: 10px 84px 25px 6px; grid-auto-rows: 25px; column-gap: 4px; margin: -4px 0 0 9px; line-height: 12px; }
.sliders label { color: #bbb; line-height: 24px; }
.sliders span { line-height: 24px; color: #bbb; }
.sliders .num { align-self: start; margin: 6px 0 0 1px; width: 26px; height: 12px; padding-left: 1px; background: #464646; font-weight: 500; }
.rng { width: 84px; height: 4px; margin-top: 10px; }
.rng::-webkit-slider-thumb { appearance: none; width: 8px; height: 6px; margin-top: 7px; background: #ccc; clip-path: polygon(50% 0, 100% 40%, 100% 100%, 0 100%, 0 40%); }
.hue { background: linear-gradient(90deg, #c42, #db5 17%, #4b4 33%, #3bb 50%, #228 66%, #b2a 83%, #c33); }
.sat { background: linear-gradient(90deg, #bcbcbc, #77a0ba 60%, #1d6699); }
.bri { background: linear-gradient(90deg, #000, #1f4b70 60%, #4087b8); }
.hexrow { display: flex; align-items: center; height: 13px; margin: 7px 13px 0 5px; }
.q { width: 9px; height: 9px; }
.q.black { width: 10px; background: #000; }
.q.white { background: #fff; }
.hexrow label { margin-left: auto; margin-right: 4px; font-size: 9px; }
.hexv { width: 46px; height: 12px; padding-left: 3px; background: #464646; }
.spectrum { height: 140px; margin: 7px 13px 7px 6px; background: linear-gradient(180deg, #fff 0, rgba(255,255,255,.75) 12%, rgba(255,255,255,0) 50%, rgba(0,0,0,0) 52%, rgba(0,0,0,.55) 75%, #000 97%), linear-gradient(90deg, #e2302c 0, #f7f23a 18%, #6cf23c 32%, #6cf5e4 52%, #1620d8 67%, #d81be4 83%, #dd1b3b 100%); }

.swatches { display: flex; flex-direction: column; flex: 1; min-height: 0; }
.swatches .ptab.active { padding: 0 7px; }
.sw-top { display: flex; align-items: center; padding: 5px 4px 4px 6px; }
.fs-mini { width: 24px; height: 22px; margin-right: auto; }
.view { display: grid; place-items: center; width: 16px; height: 16px; margin-left: 3px; color: #ccc; }
.view.on { background: #2e2e2e; color: #fff; }
.swgrid { display: grid; grid-template-columns: repeat(16, 1fr); grid-auto-rows: 10px; gap: 1px; margin: 0 13px 0 5px; }
.sw { display: block; width: 100%; height: 100%; }
.sw.first-col { grid-column: 1; }
.sw.selected { outline: 1px solid #eee; outline-offset: -1px; box-shadow: 0 0 0 1px #222; }
.sw svg { width: 100%; height: 100%; }
.pfoot { display: flex; align-items: center; gap: 8px; height: 19px; margin-top: auto; padding: 0 18px 0 7px; }
.grow { flex: 1; }
.guide { flex: none; height: 53px; border-top: 1px solid #3a3a3a; border-bottom: 2px solid #3f3f3f; }
.guide-row { display: flex; align-items: center; gap: 7px; padding: 7px 0 0 5px; }
.base { width: 14px; height: 14px; border: 2px solid #eee; background: #3a7ab8; outline: 1px solid #222; outline-offset: -3px; }
.harmony { display: flex; align-items: center; width: 97px; height: 14px; background: #494949; }
.hblack { width: 12px; height: 12px; margin-right: 1px; background: #000; border: 1px solid #bbb; }
.h1 { width: 22px; height: 12px; background: linear-gradient(90deg, #625858, #776b60); }
.h2 { width: 13px; height: 12px; background: #2f3d2d; }
.h3 { width: 12px; height: 12px; background: linear-gradient(90deg, #4a4b75, #494960); }
.harmony svg { margin-left: auto; }
```
FILE: swatches.js
```js
const rows = [
  ["none", "reg", "#fff", "#000", "#cf2030", "#fff33b", "#0aa859", "#10a7e8", "#2e3192", "#d41c8c", "#b31f3d", "#d43c3c", "#dd5a3e", "#e59445", "#eeb04f", "#f6ee4c"],
  ["#d6e04a", "#9ccb58", "#5db550", "#3d9a45", "#246b38", "#4dae80", "#45a5a5", "#4aa3dc", "*#3b78b8", "#2e3c98", "#29206b", "#6a2d91", "#7d2c8f", "#93205f", "#cf2478", "#d12f72"],
  ["#bfb090", "#93876f", "#6f6257", "#54463f", "#b9936a", "#9b744c", "#7d5633", "#6c4522", "#5a3817", "#42290f", "linear-gradient(90deg,#fff,#333)", "linear-gradient(90deg,#fbe36a,#e8742c)", "linear-gradient(90deg,#3c8ccc,#dce8f4)", "radial-gradient(circle,#fff 3px,#000 4px)", "radial-gradient(circle,#d8efb0 2px,#7cab44 3px,#d8e8b8 5px)", "repeating-conic-gradient(#b7a99a 0 25%,#7d6d62 0 50%)"],
  ["folder", "#000", "#333", "#4c4c4c", "#6a6a6a", "#828282", "#8f8f8f", "#a0a0a0", "#b4b4b4", "#dcdcdc", "#ececec", "#f8f8f8"],
  ["folder", "#cf2035", "#e0673a", "#f5e84e", "#45a549", "#263f97", "#663a8c"]
];
const icons = {
  none: '<svg viewBox="0 0 10 10"><path fill="#fff" d="M0 0h10v10H0z"/><path d="M0 10 10 0" stroke="#c22" stroke-width="1.500"/></svg>',
  reg: '<svg viewBox="0 0 10 10"><path fill="#fff" d="M0 0h10v10H0z"/><circle cx="5" cy="5" r="2.500" fill="none" stroke="#333"/><path d="M5 0v10M0 5h10" stroke="#333"/></svg>',
  folder: '<svg viewBox="0 0 12 10"><use href="#folder"/></svg>'
};
const grid = document.getElementById("swgrid");
rows.forEach(row => row.forEach((c, i) => {
  const b = document.createElement("button");
  b.className = "sw" + (i === 0 ? " first-col" : "") + (c[0] === "*" ? " selected" : "");
  if (icons[c]) b.innerHTML = icons[c];
  else b.style.background = c.replace("*", "");
  b.setAttribute("aria-label", "Swatch " + c.replace("*", ""));
  grid.append(b);
}));
```
